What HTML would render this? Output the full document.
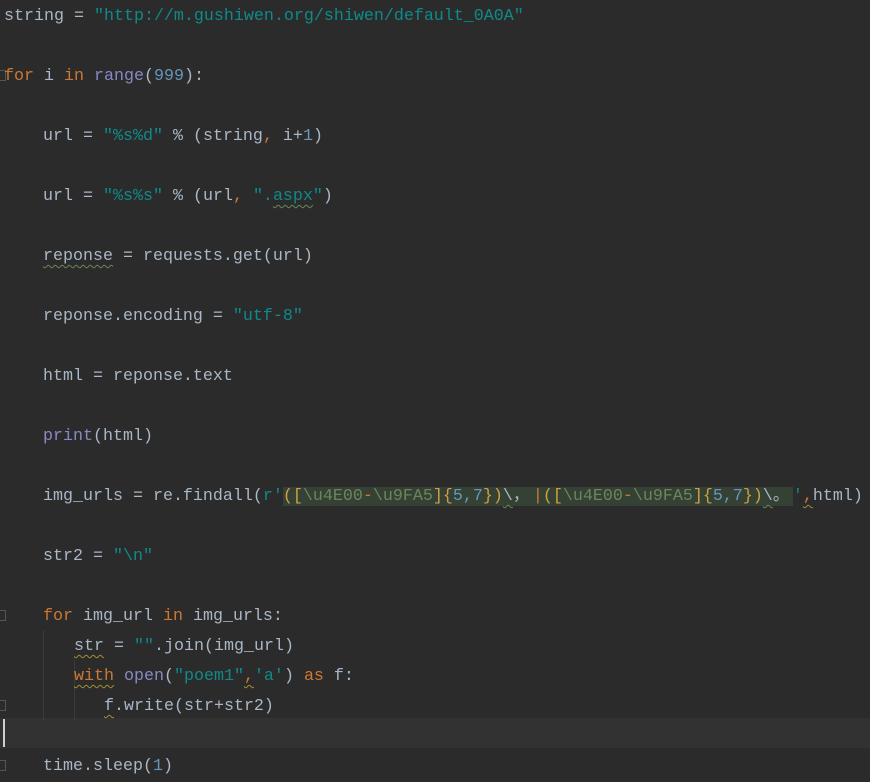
<!DOCTYPE html>
<html><head><meta charset="utf-8"><style>
html,body{margin:0;padding:0;}
body{width:870px;height:777px;background:#2b2b2b;overflow:hidden;position:relative;font-family:"Liberation Mono","Noto Sans CJK SC",monospace;font-size:16.67px;color:#a9b7c6;}
.l{position:absolute;height:30px;line-height:30px;white-space:pre;margin-top:2px;}
.k{color:#cc7832;}
.s{color:#0f8a8a;}
.b{color:#8888c6;}
.n{color:#6897bb;}
.rg{background:#344134;}
.y{color:#d0a040;}
.g{color:#6a8759;}
.cj{display:inline-block;width:20px;}
.w{text-decoration:underline wavy #6a8759;text-decoration-thickness:1px;text-underline-offset:4px;}
.wy{text-decoration:underline wavy #a09030;text-decoration-thickness:1px;text-underline-offset:4px;}
.cur{position:absolute;left:0;top:718px;width:870px;height:30px;background:#323232;}
.caret{position:absolute;left:3px;top:719px;width:2px;height:28px;background:#d0d0d0;}
.guide{position:absolute;width:1px;background:#3b3b3b;}
.fold{position:absolute;left:0;width:5px;height:9px;border:1px solid #555;border-left:none;}
</style></head><body>
<div class="cur"></div><div class="caret"></div>
<div class="guide" style="left:43px;top:630px;height:90px"></div>
<div class="guide" style="left:74px;top:660px;height:60px"></div>
<div class="fold" style="top:70px"></div>
<div class="fold" style="top:610px"></div>
<div class="fold" style="top:700px"></div>
<div class="fold" style="top:760px"></div>
<div class="l" style="left:4px;top:0">string = <span class="s">"http://m.gushiwen.org/shiwen/default_0A0A"</span></div>
<div class="l" style="left:4px;top:60px"><span class="k">for</span> i <span class="k">in</span> <span class="b">range</span>(<span class="n">999</span>):</div>
<div class="l" style="left:43px;top:120px">url = <span class="s">"%s%d"</span> % (string<span class="k">,</span> i+<span class="n">1</span>)</div>
<div class="l" style="left:43px;top:180px">url = <span class="s">"%s%s"</span> % (url<span class="k">,</span> <span class="s">".<span class="w">aspx</span>"</span>)</div>
<div class="l" style="left:43px;top:240px"><span class="w">reponse</span> = requests.get(url)</div>
<div class="l" style="left:43px;top:300px">reponse.encoding = <span class="s">"utf-8"</span></div>
<div class="l" style="left:43px;top:360px">html = reponse.text</div>
<div class="l" style="left:43px;top:420px"><span class="b">print</span>(html)</div>
<div class="l" style="left:43px;top:480px">img_urls = re.findall(<span class="s">r'</span><span class="rg"><span class="y">([</span><span class="g">\u4E00</span><span class="k">-</span><span class="g">\u9FA5</span><span class="y">]{</span><span class="n">5,7</span><span class="y">})</span><span class="w">\<span class="cj">，</span></span><span class="k">|</span><span class="y">([</span><span class="g">\u4E00</span><span class="k">-</span><span class="g">\u9FA5</span><span class="y">]{</span><span class="n">5,7</span><span class="y">})</span><span class="w">\<span class="cj">。</span></span></span><span class="s">'</span><span class="k wy">,</span>html)</div>
<div class="l" style="left:43px;top:540px">str2 = <span class="s">"\n"</span></div>
<div class="l" style="left:43px;top:600px"><span class="k">for</span> img_url <span class="k">in</span> img_urls:</div>
<div class="l" style="left:74px;top:630px"><span class="wy">str</span> = <span class="s">""</span>.join(img_url)</div>
<div class="l" style="left:74px;top:660px"><span class="k wy">with</span> <span class="b">open</span>(<span class="s">"poem1"</span><span class="k wy">,</span><span class="s">'a'</span>) <span class="k">as</span> f:</div>
<div class="l" style="left:104px;top:690px"><span class="wy">f</span>.write(str+str2)</div>
<div class="l" style="left:43px;top:750px">time.sleep(<span class="n">1</span>)</div>
</body></html>
